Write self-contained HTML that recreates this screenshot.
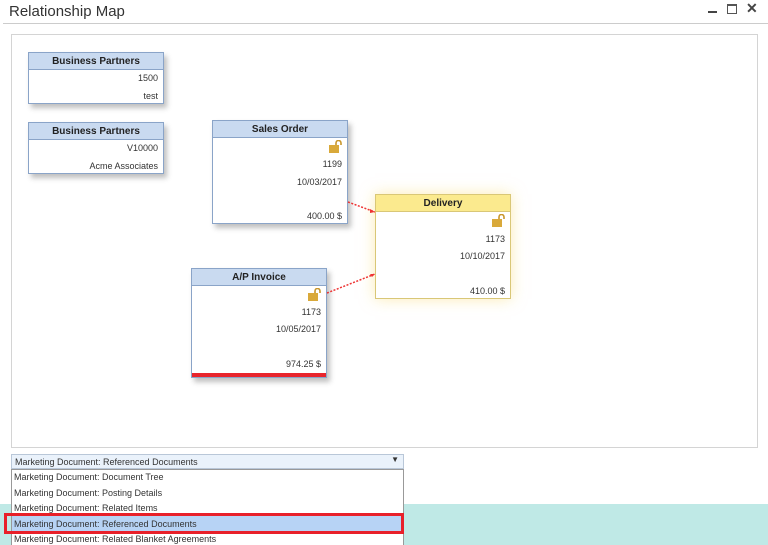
<!DOCTYPE html>
<html><head><style>
*{margin:0;padding:0;box-sizing:border-box}
body{width:768px;height:545px;overflow:hidden;background:#fff;font-family:"Liberation Sans",sans-serif;position:relative}
.abs{position:absolute}
.title{left:9px;top:3px;font-size:15px;color:#333}
.box{position:absolute;background:#fff;border:1px solid #8aa4c8;box-shadow:3px 4px 5px rgba(0,0,0,.25)}
.hd{height:17px;background:#c9daf0;border-bottom:1px solid #8aa4c8;font-weight:bold;font-size:10px;text-align:center;line-height:18px;color:#222}
.ln{position:absolute;right:5px;font-size:9px;color:#333}
.lock{position:absolute;right:4px;width:15px;height:13px}
.item{position:absolute;left:14px;font-size:9px;color:#333}
</style></head><body>
<div class="abs title">Relationship Map</div>
<div class="abs" style="left:708px;top:11px;width:9px;height:2px;background:#444"></div>
<div class="abs" style="left:727px;top:4px;width:10px;height:10px;border:1.5px solid #555;border-top-width:2px"></div>
<div class="abs" style="left:746px;top:0px;font-size:14px;color:#444;font-weight:bold">✕</div>
<div class="abs" style="left:3px;top:23px;width:765px;height:1px;background:#ccc"></div>
<div class="abs" style="left:11px;top:34px;width:747px;height:414px;border:1px solid #d4d4d4"></div>

<div class="box" style="left:28px;top:52px;width:136px;height:52px"><div class="hd">Business Partners</div>
<div class="ln" style="top:20px">1500</div><div class="ln" style="top:38px">test</div></div>
<div class="box" style="left:28px;top:122px;width:136px;height:52px"><div class="hd">Business Partners</div>
<div class="ln" style="top:20px">V10000</div><div class="ln" style="top:38px">Acme Associates</div></div>

<div class="box" style="left:212px;top:120px;width:136px;height:104px"><div class="hd">Sales Order</div>
<svg class="lock" style="top:19px" viewBox="0 0 15 13"><rect x="1" y="5" width="10" height="8" fill="#d9a93a"/><path d="M8 5V3a2.5 2.5 0 0 1 5 0V5" stroke="#c8962a" stroke-width="1.6" fill="none"/></svg>
<div class="ln" style="top:38px">1199</div><div class="ln" style="top:56px">10/03/2017</div><div class="ln" style="top:90px">400.00 $</div></div>

<div class="box" style="left:375px;top:194px;width:136px;height:105px;border-color:#d9c777;box-shadow:0 0 14px rgba(250,220,120,.55)"><div class="hd" style="background:#fbea8e;border-color:#d9c777">Delivery</div>
<svg class="lock" style="top:19px" viewBox="0 0 15 13"><rect x="1" y="5" width="10" height="8" fill="#d9a93a"/><path d="M8 5V3a2.5 2.5 0 0 1 5 0V5" stroke="#c8962a" stroke-width="1.6" fill="none"/></svg>
<div class="ln" style="top:39px">1173</div><div class="ln" style="top:56px">10/10/2017</div><div class="ln" style="top:91px">410.00 $</div></div>

<div class="box" style="left:191px;top:268px;width:136px;height:110px"><div class="hd">A/P Invoice</div>
<svg class="lock" style="top:19px" viewBox="0 0 15 13"><rect x="1" y="5" width="10" height="8" fill="#d9a93a"/><path d="M8 5V3a2.5 2.5 0 0 1 5 0V5" stroke="#c8962a" stroke-width="1.6" fill="none"/></svg>
<div class="ln" style="top:38px">1173</div><div class="ln" style="top:55px">10/05/2017</div><div class="ln" style="top:90px">974.25 $</div>
<div class="abs" style="left:0;right:0;bottom:0;height:4px;background:#e8242c"></div></div>

<svg class="abs" style="left:0;top:0" width="768" height="545">
<path d="M348 202L375 212" stroke="#e33" stroke-width="1.5" stroke-dasharray="2 1.5"/>
<path d="M327 293L375 274" stroke="#e33" stroke-width="1.5" stroke-dasharray="2 1.5"/>
<path d="M375 212l-5-3v4z" fill="#e33"/><path d="M375 274l-5 0 2 3z" fill="#e33"/>
</svg>

<div class="abs" style="left:0;top:504px;width:768px;height:41px;background:#bfe9e6"></div>
<div class="abs" style="left:11px;top:454px;width:393px;height:15px;border:1px solid #b9c7d8;background:#eaf2fb;font-size:9px;color:#333;padding:2px 3px">Marketing Document: Referenced Documents<span style="position:absolute;right:4px;top:0;font-size:8px">▼</span></div>
<div class="abs" style="left:11px;top:469px;width:393px;height:76px;border:1px solid #999;border-bottom:none;background:#fff"></div>
<div class="item" style="top:472px">Marketing Document: Document Tree</div>
<div class="item" style="top:488px">Marketing Document: Posting Details</div>
<div class="item" style="top:503px">Marketing Document: Related Items</div>
<div class="abs" style="left:12px;top:516px;width:391px;height:15px;background:#b7d3f5"></div>
<div class="item" style="top:519px">Marketing Document: Referenced Documents</div>
<div class="item" style="top:534px">Marketing Document: Related Blanket Agreements</div>
<div class="abs" style="left:4px;top:513px;width:400px;height:21px;border:3px solid #e8202a"></div>
</body></html>
